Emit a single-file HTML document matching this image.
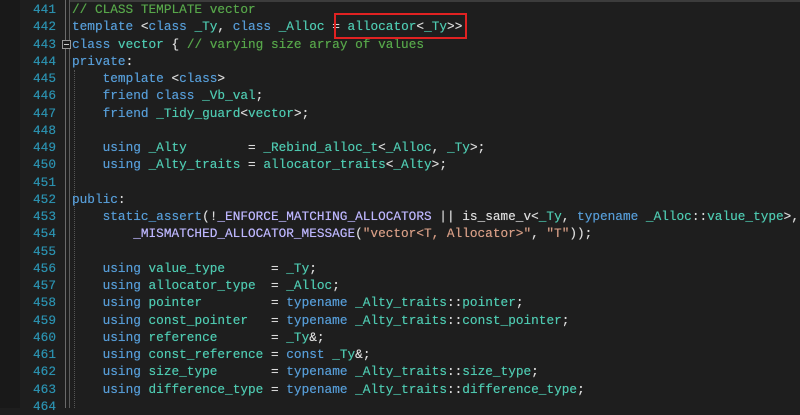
<!DOCTYPE html>
<html><head><meta charset="utf-8"><style>
html,body{margin:0;padding:0;background:#1e1e1e;width:800px;height:408px;overflow:hidden}
.strip{position:absolute;left:0;top:0;width:20px;height:408px;background:#191919}
.topbar{position:absolute;left:70px;top:0;width:730px;height:2px;background:#3c3c3c}
.g1{position:absolute;left:65px;top:0;width:1px;height:408px;background:#6a6a6a}
.g2{position:absolute;left:69px;top:0;width:1px;height:408px;background:#5a5a5a}
.ln{position:absolute;left:0;top:1px;width:56px;text-align:right;color:#2b91af}
.code{position:absolute;left:72px;top:1px;color:#dcdcdc;white-space:pre}
.ln,.code{font-family:"Liberation Mono",monospace;font-size:12.75px;line-height:17.25px;text-shadow:0 0 0.4px currentColor}
.k{color:#569cd6}.t{color:#4ec9b0}.c{color:#57a64a}.s{color:#d69d85}.m{color:#beb7ff}
.box{position:absolute;left:334px;top:13px;width:129px;height:22px;border:2px solid #e02222;z-index:5}
.fold{position:absolute;left:62px;top:40px;width:7px;height:7px;border:1px solid #999;background:#1e1e1e}
.fold:after{content:"";position:absolute;left:1px;top:3px;width:5px;height:1px;background:#ccc}
.ig{position:absolute;width:0;border-left:1px dotted #555}
</style></head><body>
<div class="strip"></div><div class="topbar"></div><div class="g1"></div><div class="g2"></div>
<div class="ig" style="left:74px;top:70px;height:338px"></div>
<div class="ln">441<br>442<br>443<br>444<br>445<br>446<br>447<br>448<br>449<br>450<br>451<br>452<br>453<br>454<br>455<br>456<br>457<br>458<br>459<br>460<br>461<br>462<br>463<br>464</div>
<div class="fold"></div>
<div class="code"><span class="c">// CLASS TEMPLATE vector</span>
<span class="k">template</span> &lt;<span class="k">class</span> <span class="t">_Ty</span>, <span class="k">class</span> <span class="t">_Alloc</span> = <span class="t">allocator</span>&lt;<span class="t">_Ty</span>&gt;&gt;
<span class="k">class</span> <span class="t">vector</span> { <span class="c">// varying size array of values</span>
<span class="k">private</span>:
    <span class="k">template</span> &lt;<span class="k">class</span>&gt;
    <span class="k">friend</span> <span class="k">class</span> <span class="t">_Vb_val</span>;
    <span class="k">friend</span> <span class="t">_Tidy_guard</span>&lt;<span class="t">vector</span>&gt;;

    <span class="k">using</span> <span class="t">_Alty</span>        = <span class="t">_Rebind_alloc_t</span>&lt;<span class="t">_Alloc</span>, <span class="t">_Ty</span>&gt;;
    <span class="k">using</span> <span class="t">_Alty_traits</span> = <span class="t">allocator_traits</span>&lt;<span class="t">_Alty</span>&gt;;

<span class="k">public</span>:
    <span class="k">static_assert</span>(!<span class="m">_ENFORCE_MATCHING_ALLOCATORS</span> || is_same_v&lt;<span class="t">_Ty</span>, <span class="k">typename</span> <span class="t">_Alloc</span>::<span class="t">value_type</span>&gt;,
        <span class="m">_MISMATCHED_ALLOCATOR_MESSAGE</span>(<span class="s">"vector&lt;T, Allocator&gt;"</span>, <span class="s">"T"</span>));

    <span class="k">using</span> <span class="t">value_type</span>      = <span class="t">_Ty</span>;
    <span class="k">using</span> <span class="t">allocator_type</span>  = <span class="t">_Alloc</span>;
    <span class="k">using</span> <span class="t">pointer</span>         = <span class="k">typename</span> <span class="t">_Alty_traits</span>::<span class="t">pointer</span>;
    <span class="k">using</span> <span class="t">const_pointer</span>   = <span class="k">typename</span> <span class="t">_Alty_traits</span>::<span class="t">const_pointer</span>;
    <span class="k">using</span> <span class="t">reference</span>       = <span class="t">_Ty</span>&amp;;
    <span class="k">using</span> <span class="t">const_reference</span> = <span class="k">const</span> <span class="t">_Ty</span>&amp;;
    <span class="k">using</span> <span class="t">size_type</span>       = <span class="k">typename</span> <span class="t">_Alty_traits</span>::<span class="t">size_type</span>;
    <span class="k">using</span> <span class="t">difference_type</span> = <span class="k">typename</span> <span class="t">_Alty_traits</span>::<span class="t">difference_type</span>;
</div>
<div class="box"></div>
</body></html>
